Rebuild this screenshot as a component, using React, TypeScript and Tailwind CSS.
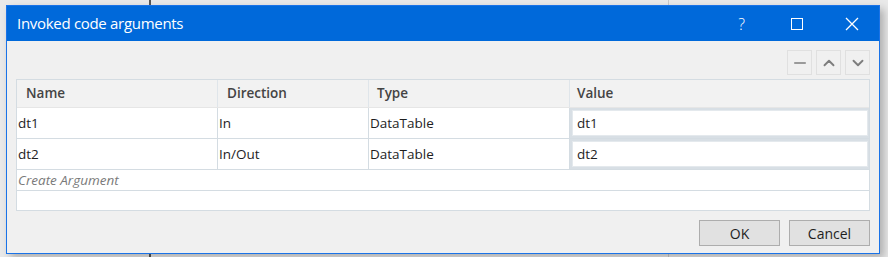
import { Minus, ChevronUp, ChevronDown } from "lucide-react";

const rows = [
  { name: "dt1", direction: "In", type: "DataTable", value: "dt1" },
  { name: "dt2", direction: "In/Out", type: "DataTable", value: "dt2" },
];

function ToolButton({ children }: { children: React.ReactNode }) {
  return (
    <button className="w-[25px] h-[25px] flex items-center justify-center border border-[#e0e0e0] bg-[#f0f0f0] text-[#7d7d7d]">
      {children}
    </button>
  );
}

export default function App() {
  return (
    <div
      className="relative w-[888px] h-[257px] overflow-hidden bg-[#e9e9e9] text-[#1e1e1e]"
      style={{ fontFamily: '"Open Sans", "Noto Sans", sans-serif' }}
    >
      {/* background window bits behind the dialog */}
      <div className="absolute left-[149px] top-0 w-[2px] h-full bg-[#555]" />
      <div className="absolute left-[668px] top-0 w-px h-full bg-[#c8c8c8]" />

      <div className="relative ml-[6px] mt-[5px] w-[874px] h-[249px] border border-[#1a73e8] bg-[#f0f0f0] flex flex-col shadow-[4px_4px_8px_rgba(0,0,0,0.25)]">
        {/* title bar */}
        <div className="h-[35px] bg-[#0069da] flex items-center text-white">
          <span className="ml-[10px] text-[15px] tracking-[-0.3px]">Invoked code arguments</span>
          <div className="ml-auto flex items-center h-full">
            <span className="w-[55px] text-center text-[16px] font-light">?</span>
            <span className="w-[55px] flex justify-center">
              <span className="w-[12px] h-[12px] border-[1.5px] border-white" />
            </span>
            <span className="w-[55px] flex justify-center">
              <svg width="14" height="14" viewBox="0 0 14 14" stroke="white" strokeWidth="1.3">
                <path d="M1 1 L13 13 M13 1 L1 13" />
              </svg>
            </span>
          </div>
        </div>

        {/* body */}
        <div className="flex-1 px-[9px] pt-[9px]">
          <div className="flex justify-end gap-[4px]">
            <ToolButton>
              <Minus size={18} strokeWidth={2} />
            </ToolButton>
            <ToolButton>
              <ChevronUp size={18} strokeWidth={2.5} />
            </ToolButton>
            <ToolButton>
              <ChevronDown size={18} strokeWidth={2.5} />
            </ToolButton>
          </div>

          <div className="mt-[4px] w-[854px] border border-[#d4dce2] text-[13.5px]">
            <div className="grid grid-cols-[201px_151px_201px_1fr] h-[28px] bg-[#f2f2f2] font-semibold text-[#444] border-b border-[#e6e6e6]">
              <div className="pl-[9px] flex items-center border-r border-[#dfe5ea]">Name</div>
              <div className="pl-[9px] flex items-center border-r border-[#dfe5ea]">Direction</div>
              <div className="pl-[8px] flex items-center border-r border-[#dfe5ea]">Type</div>
              <div className="pl-[7px] flex items-center">Value</div>
            </div>
            {rows.map((r) => (
              <div
                key={r.name}
                className="grid grid-cols-[201px_151px_201px_1fr] h-[31px] bg-white border-b border-[#d4dce2]"
              >
                <div className="pl-[1px] flex items-center border-r border-[#d4dce2]">{r.name}</div>
                <div className="pl-[1px] flex items-center border-r border-[#d4dce2]">{r.direction}</div>
                <div className="pl-[1px] flex items-center border-r border-[#d4dce2]">{r.type}</div>
                <div className="bg-[#d8dfe5] p-[2px] pr-[1px]">
                  <div className="h-full bg-white border border-[#e4e9ed] flex items-center pl-[4px]">
                    {r.value}
                  </div>
                </div>
              </div>
            ))}
            <div className="h-[21px] bg-white border-b border-[#d4dce2] flex items-center pl-[1px] italic text-[#7a7a7a]">
              Create Argument
            </div>
            <div className="h-[19px] bg-white" />
          </div>

          <div className="mt-[9px] flex justify-end gap-[9px] text-[14px]">
            <button className="w-[81px] h-[26px] bg-[#e1e1e1] border border-[#adadad]">OK</button>
            <button className="w-[81px] h-[26px] bg-[#e1e1e1] border border-[#adadad]">Cancel</button>
          </div>
        </div>
      </div>
    </div>
  );
}
